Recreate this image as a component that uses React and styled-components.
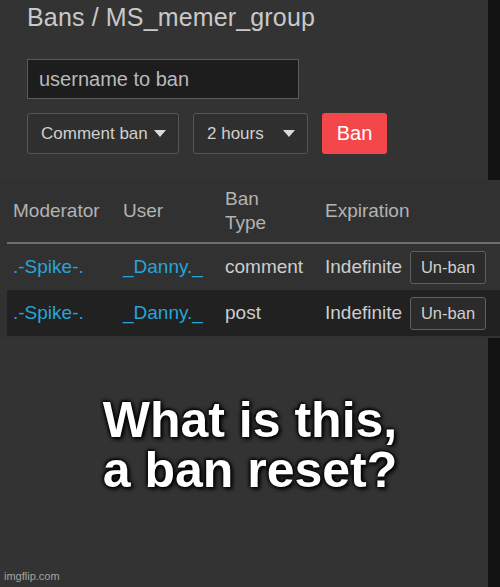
import React from "react";
import styled, { createGlobalStyle } from "styled-components";

const Global = createGlobalStyle`
  html, body { margin: 0; padding: 0; background: #333333; }
  body { font-family: "Liberation Sans", Arial, sans-serif; }
  * { box-sizing: border-box; }
`;

const Page = styled.div`
  width: 500px;
  height: 587px;
  display: flex;
  flex-direction: column;
  background: #333333;
  overflow: hidden;
`;

const stripBg = `linear-gradient(to right, #333333 0, #333333 488px, #131313 488px, #131313 100%)`;

const TopSection = styled.section`
  height: 180px;
  padding: 2px 0 0 27px;
  background: ${stripBg};
  display: flex;
  flex-direction: column;
`;

const Title = styled.h1`
  margin: 0;
  font-size: 25px;
  line-height: 30px;
  font-weight: normal;
  color: #c9c9c9;
  letter-spacing: 0.15px;
`;

const Input = styled.div`
  margin-top: 27px;
  width: 272px;
  height: 40px;
  background: #1d1d1d;
  border: 1px solid #5b5b5b;
  display: flex;
  align-items: center;
  padding-left: 11px;
  font-size: 20px;
  color: #b9b9b9;
`;

const Controls = styled.div`
  margin-top: 14px;
  display: flex;
  gap: 14px;
`;

const Select = styled.div`
  width: ${(p) => p.$w}px;
  height: 41px;
  border: 1px solid #565656;
  border-radius: 3px;
  background: #2f2f2f;
  display: flex;
  align-items: center;
  justify-content: space-between;
  padding: 0 12px 0 13px;
  font-size: 17px;
  color: #cfcfcf;
`;

const Caret = () => (
  <svg width="12" height="7" viewBox="0 0 12 7">
    <path d="M0 0 H12 L6 7 Z" fill="#dcdcdc" />
  </svg>
);

const BanButton = styled.div`
  width: 65px;
  height: 41px;
  border-radius: 3px;
  background: #f4474b;
  color: #ffffff;
  font-size: 20px;
  display: flex;
  align-items: center;
  justify-content: center;
`;

const TableSection = styled.section`
  height: 158px;
  padding-left: 7px;
  background: #313131;
`;

const cols = "110px 102px 100px 85px 1fr";

const HeadRow = styled.div`
  display: grid;
  grid-template-columns: ${cols};
  align-items: center;
  height: 64px;
  border-bottom: 2px solid #6f6f6f;
`;

const HeadCell = styled.div`
  padding-left: 6px;
  font-size: 19px;
  line-height: 24px;
  color: #b3b3b3;
`;

const Row = styled.div`
  display: grid;
  grid-template-columns: ${cols};
  align-items: center;
  height: 46px;
  background: ${(p) => (p.$dark ? "#212121" : "transparent")};
`;

const Cell = styled.div`
  padding-left: 6px;
  font-size: 19px;
  white-space: nowrap;
  color: ${(p) => (p.$link ? "#27a5d6" : "#cdcdcd")};
`;

const UnbanButton = styled.div`
  margin-left: 6px;
  width: 76px;
  height: 33px;
  border: 1px solid #606060;
  border-radius: 3px;
  background: #2b2b2b;
  color: #cfcfcf;
  font-size: 16.5px;
  display: flex;
  align-items: center;
  justify-content: center;
`;

const BottomSection = styled.section`
  flex: 1;
  background: ${stripBg};
  display: flex;
  flex-direction: column;
  justify-content: space-between;
  padding: 57px 0 4px 0;
`;

const Caption = styled.div`
  text-align: center;
  font-family: "Liberation Sans", Arial, sans-serif;
  font-weight: bold;
  font-size: 50px;
  line-height: 50px;
  color: #ffffff;
  text-shadow: 0 0 5px #000, 2px 2px 4px #000, -1px -1px 3px #000;
`;

const Watermark = styled.div`
  padding-left: 4px;
  font-size: 11px;
  line-height: 13px;
  color: #a3a3a3;
`;

const bans = [
  { mod: ".-Spike-.", user: "_Danny._", type: "comment" },
  { mod: ".-Spike-.", user: "_Danny._", type: "post" },
];

export default function App() {
  return (
    <>
      <Global />
      <Page>
        <TopSection>
          <Title>Bans / MS_memer_group</Title>
          <Input>username to ban</Input>
          <Controls>
            <Select $w={152}>
              <span>Comment ban</span>
              <Caret />
            </Select>
            <Select $w={115}>
              <span>2 hours</span>
              <Caret />
            </Select>
            <BanButton>Ban</BanButton>
          </Controls>
        </TopSection>
        <TableSection>
          <HeadRow>
            <HeadCell>Moderator</HeadCell>
            <HeadCell>User</HeadCell>
            <HeadCell>
              Ban
              <br />
              Type
            </HeadCell>
            <HeadCell>Expiration</HeadCell>
            <HeadCell />
          </HeadRow>
          {bans.map((b, i) => (
            <Row key={i} $dark={i % 2 === 1}>
              <Cell $link>{b.mod}</Cell>
              <Cell $link>{b.user}</Cell>
              <Cell>{b.type}</Cell>
              <Cell>Indefinite</Cell>
              <UnbanButton>Un-ban</UnbanButton>
            </Row>
          ))}
        </TableSection>
        <BottomSection>
          <Caption>
            What is this,
            <br />
            a ban reset?
          </Caption>
          <Watermark>imgflip.com</Watermark>
        </BottomSection>
      </Page>
    </>
  );
}
